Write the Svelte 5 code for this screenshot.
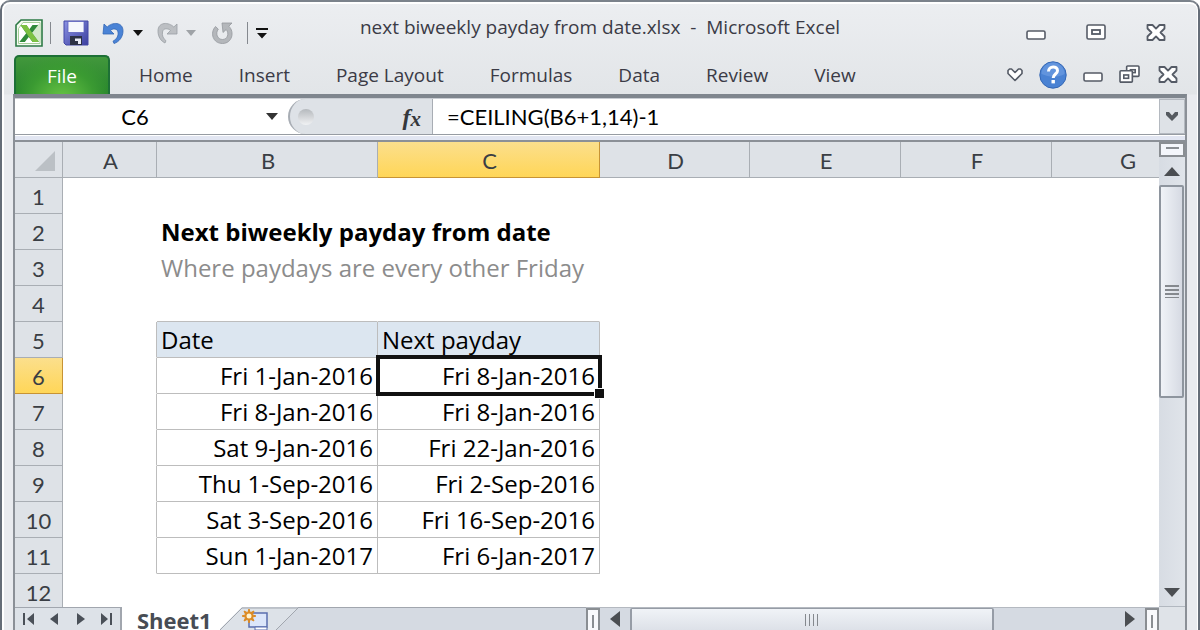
<script>
  const menus = ['Home', 'Insert', 'Page Layout', 'Formulas', 'Data', 'Review', 'View'];
  const columns = ['A', 'B', 'C', 'D', 'E', 'F', 'G'];
  const widths = [94, 221, 222, 150, 151, 151, 151];
  const rowNumbers = Array.from({ length: 12 }, (_, i) => i + 1);
  const active = 'C6';

  const cells = {
    B2: 'Next biweekly payday from date',
    B3: 'Where paydays are every other Friday',
    B5: 'Date',
    C5: 'Next payday',
    B6: 'Fri 1-Jan-2016',
    C6: 'Fri 8-Jan-2016',
    B7: 'Fri 8-Jan-2016',
    C7: 'Fri 8-Jan-2016',
    B8: 'Sat 9-Jan-2016',
    C8: 'Fri 22-Jan-2016',
    B9: 'Thu 1-Sep-2016',
    C9: 'Fri 2-Sep-2016',
    B10: 'Sat 3-Sep-2016',
    C10: 'Fri 16-Sep-2016',
    B11: 'Sun 1-Jan-2017',
    C11: 'Fri 6-Jan-2017'
  };

  let nameBox = $state(active);
  let formula = $state('=CEILING(B6+1,14)-1');

  const inTable = (col, row) => (col === 'B' || col === 'C') && row >= 5 && row <= 11;
</script>

{#snippet minimize()}
  <svg width="20" height="20" viewBox="0 0 20 20"><rect x="1" y="8" width="18" height="8" rx="1.5" fill="#fff" stroke="#555b66" stroke-width="1.6" /></svg>
{/snippet}

{#snippet cross()}
  <svg width="20" height="20" viewBox="0 0 20 20"><path d="M1.500 2h5l3.500 3.600L13.500 2h5v3.500L14.500 9.500l4 4V17h-5L10 13.400 6.500 17h-5v-3.500l4-4-4-4z" fill="#fff" stroke="#555b66" stroke-width="1.800" stroke-linejoin="round" /></svg>
{/snippet}

<div class="window">
  <header class="titlebar">
    <div class="quick">
      <svg width="28" height="28" viewBox="0 0 28 28">
        <path d="M6 1h21v26H1V6z" fill="#f4faf0" stroke="#2d7a45" stroke-width="1.6" />
        <path d="M3.500 9.500 8 3.500h17v21H3.500z" fill="#fff" stroke="#a6cf9a" />
        <path d="m17 8 7-3v18l-6-2z" fill="#d3e8cb" />
        <path d="M5.500 6h6l2.700 4.600L17.500 6h5.700l-6.200 8 6.800 9h-6.200l-3.800-5-4 5H4.300l6.900-8.800z" fill="#2f8a3a" />
        <path d="M5.500 6h6l12.300 17h-6.200z" fill="#7cc142" />
      </svg>
      <i class="divider"></i>
      <button class="save" aria-label="Save">
        <svg width="26" height="26" viewBox="0 0 26 26">
          <defs><linearGradient id="disk" x1="0" y1="0" x2="1" y2="1"><stop offset="0" stop-color="#8b92e4" /><stop offset="1" stop-color="#3b3f9f" /></linearGradient></defs>
          <path d="M1 1h24v24H3l-2-2z" fill="url(#disk)" stroke="#4247a6" />
          <path d="M5 1.500h16v11H5z" fill="#f5f7fd" stroke="#5a60bd" stroke-width=".8" />
          <path d="M7 16h12v9H7z" fill="#2c3145" />
          <path d="M12 18.500h6V24h-3v-3h-3z" fill="#e8ebf5" />
        </svg>
      </button>
      <button class="undo" aria-label="Undo">
        <svg width="24" height="24" viewBox="0 0 24 24"><path d="M2 3l3.200 3C10 1 21 .5 21 10c0 6-4 11-9 12.500l-1-2.300c4-2.200 5.500-5.500 5-9.200C15.500 7.500 11 7 8.500 9.500L12 13H1z" fill="#4a83d6" stroke="#3467b5" stroke-width=".8" /></svg>
      </button>
      <button class="drop" aria-label="Undo history"><svg width="10" height="6" viewBox="0 0 10 6"><path d="M0 0h10L5 6z" fill="#111" /></svg></button>
      <button class="redo" aria-label="Redo">
        <svg width="24" height="24" viewBox="0 0 24 24"><path d="M22 3l-3.200 3C14 1 3 .5 3 10c0 6 3 10 7 12l1-2.300C8 17.500 7 14.500 7.500 11 8 7 13 7 15.500 9.500L12 13h10z" fill="#bcbfc3" stroke="#9b9fa4" stroke-width=".8" /></svg>
      </button>
      <button class="drop" aria-label="Redo history"><svg width="10" height="6" viewBox="0 0 10 6"><path d="M0 0h10L5 6z" fill="#9fa3a7" /></svg></button>
      <button class="repeat" aria-label="Repeat">
        <svg width="24" height="24" viewBox="0 0 24 24"><path d="M11 2h10l-3.200 3.200C24 11 21 22.500 11.500 22.500 2 22.500-1.500 12 4.500 5.500l2.800 2.700C4 12.500 6.500 18.500 11.500 18.500s7-6 3.700-10L12 11.500z" fill="#b4b7bb" stroke="#94989d" stroke-width=".8" /></svg>
      </button>
      <i class="divider"></i>
      <button class="more" aria-label="Customize toolbar"><svg width="12" height="12" viewBox="0 0 12 12"><path d="M0 1h12v2H0zM1 6h10l-5 5.500z" fill="#111" /></svg></button>
    </div>
    <h1>next biweekly payday from date.xlsx&nbsp; -&nbsp; Microsoft Excel</h1>
    <div class="controls">
      <button aria-label="Minimize">{@render minimize()}</button>
      <button aria-label="Maximize"><svg width="20" height="20" viewBox="0 0 20 20"><rect x="1" y="2" width="18" height="14" rx="1.500" fill="#fff" stroke="#555b66" stroke-width="1.600" /><rect x="6" y="7" width="8" height="4" fill="#fff" stroke="#555b66" stroke-width="1.800" /></svg></button>
      <button aria-label="Close">{@render cross()}</button>
    </div>
  </header>

  <nav class="ribbon">
    <button class="file">File</button>
    {#each menus as menu}<button class="menu">{menu}</button>{/each}
    <div class="doc-controls">
      <button aria-label="Collapse ribbon"><svg width="16" height="14" viewBox="0 0 16 14"><path d="M1 2.500 2.500 1h2L8 4.500 11.500 1h2L15 2.500v3L8 12.500 1 5.500z" fill="#fff" stroke="#555b66" stroke-width="1.600" stroke-linejoin="round" /></svg></button>
      <button aria-label="Help"><svg width="28" height="28" viewBox="0 0 28 28"><circle cx="14" cy="14" r="13.200" fill="#4a82d3" stroke="#3567b4" /><path d="M2.500 13a11.500 11.500 0 0 1 23 0c-7 4-16 3-23 0z" fill="#6294dd" /><path d="M9.500 10.500c.2-6 9-6 9-.8 0 3.300-4.300 3.400-4.300 7.300" fill="none" stroke="#fff" stroke-width="3" /><rect x="12.500" y="19" width="3.400" height="3.400" fill="#fff" /></svg></button>
      <button aria-label="Minimize workbook">{@render minimize()}</button>
      <button class="restore" aria-label="Restore workbook"><svg width="21" height="19" viewBox="0 0 22 20"><g fill="#fff" stroke="#555b66" stroke-width="1.700"><rect x="8" y="1" width="13" height="11" rx="1" /><rect x="12" y="5" width="5" height="3" /><rect x="1" y="6" width="13" height="12" rx="1" /><rect x="5" y="10.500" width="5" height="3.500" /></g></svg></button>
      <button aria-label="Close workbook">{@render cross()}</button>
    </div>
  </nav>

  <main class="workbook">
    <div class="formula-bar">
      <input class="name-box" aria-label="Name box" bind:value={nameBox} />
      <button class="name-drop" aria-label="Named ranges"><svg width="12" height="7" viewBox="0 0 12 7"><path d="M0 0h12L6 7z" fill="#333" /></svg></button>
      <div class="function">
        <span class="knob"></span>
        <button aria-label="Insert function"><i>f</i><i class="x">x</i></button>
      </div>
      <input class="formula" aria-label="Formula" bind:value={formula} />
      <button class="expand" aria-label="Expand formula bar"><svg width="12" height="9" viewBox="0 0 12 9"><path d="M0 0h3l3 3.500L9 0h3v3L6 9 0 3z" fill="#555a60" /></svg></button>
    </div>
    <div class="strip"></div>

    <div class="body">
      <div class="viewport">
        <table>
          <colgroup>
            <col style:width="50px" />
            {#each widths as w}<col style:width="{w}px" />{/each}
          </colgroup>
          <thead>
            <tr>
              <th class="corner"><svg width="20" height="20" viewBox="0 0 20 20"><path d="M20 0v20H0z" fill="#bbc0c5" /></svg></th>
              {#each columns as col}<th scope="col" class:on={active[0] === col}>{col}</th>{/each}
            </tr>
          </thead>
          <tbody>
            {#each rowNumbers as row}
              <tr>
                <th scope="row" class:on={active.slice(1) === String(row)}>{row}</th>
                {#each columns as col}
                  {@const id = col + row}
                  <td
                    class:boxed={inTable(col, row)}
                    class:pre-first={col === 'A' && row >= 5 && row <= 11}
                    class:above={row === 4 && (col === 'B' || col === 'C')}
                    class:head={inTable(col, row) && row === 5}
                    class:title={id === 'B2'}
                    class:note={id === 'B3'}
                    class:active={id === active}
                  >{cells[id] ?? ''}{#if id === active}<span class="outline"></span><span class="handle"></span>{/if}</td>
                {/each}
              </tr>
            {/each}
          </tbody>
        </table>
      </div>
      <div class="vscroll">
        <span class="split"></span>
        <button class="up" aria-label="Scroll up"><svg width="16" height="9" viewBox="0 0 16 9"><path d="M8 0l8 9H0z" fill="#4b4e52" /></svg></button>
        <div class="vtrack"><div class="vthumb"><span></span></div></div>
        <button class="down" aria-label="Scroll down"><svg width="16" height="9" viewBox="0 0 16 9"><path d="M0 0h16L8 9z" fill="#4b4e52" /></svg></button>
      </div>
    </div>

    <footer>
      <div class="tab-nav">
        <button aria-label="First sheet"><svg width="12" height="12" viewBox="0 0 12 12"><path d="M1 0h2v12H1zM12 0v12L5 6z" fill="#4a5058" /></svg></button>
        <button aria-label="Previous sheet"><svg width="12" height="12" viewBox="0 0 12 12"><path d="M10 0v12L2 6z" fill="#4a5058" /></svg></button>
        <button aria-label="Next sheet"><svg width="12" height="12" viewBox="0 0 12 12"><path d="M2 0v12l8-6z" fill="#4a5058" /></svg></button>
        <button aria-label="Last sheet"><svg width="12" height="12" viewBox="0 0 12 12"><path d="M9 0h2v12H9zM0 0v12l7-6z" fill="#4a5058" /></svg></button>
      </div>
      <button class="sheet">Sheet1</button>
      <button class="new-sheet" aria-label="Insert worksheet">
        <svg width="78" height="23" viewBox="0 0 78 23">
          <path d="M0 0h22L0 22z" fill="#fff" />
          <path d="M22 1h56L56 23H0z" fill="#dde2e8" />
          <path d="M78 1 56 23h22z" fill="#d5dae2" />
          <path d="M0 23 22 1h56L56 23" fill="none" stroke="#a1a6ae" />
          <path d="M29 6h18v14H29z" fill="#dce6fa" stroke="#5b6fae" stroke-width="1.500" />
          <path d="M35 20h12v3H35z" fill="#fff" stroke="#5b6fae" />
          <path d="m29 2 1.300 3.800L34 4l-1.700 3.700L36 9l-3.700 1.300L34 14l-3.700-1.800L29 16l-1.300-3.800L24 14l1.700-3.700L22 9l3.700-1.300L24 4l3.700 1.800z" fill="#dc8a22" stroke="#dc8a22" />
          <circle cx="29" cy="9" r="2.500" fill="#fff3cf" />
        </svg>
      </button>
      <span class="gap"></span>
      <div class="hscroll">
        <span class="hsplit"></span>
        <button aria-label="Scroll left"><svg width="10" height="16" viewBox="0 0 10 16"><path d="M10 0v16L0 8z" fill="#4b4e52" /></svg></button>
        <div class="htrack"><div class="hthumb"><span></span></div></div>
        <button class="right" aria-label="Scroll right"><svg width="10" height="16" viewBox="0 0 10 16"><path d="M0 0v16l10-8z" fill="#4b4e52" /></svg></button>
        <span class="hsplit"></span>
      </div>
      <span class="size-corner"></span>
    </footer>
  </main>
</div>

<style>
  :global(body) {
    background: #fff;
  }
  :global(#app) {
    height: 100vh;
    overflow: hidden;
  }
  * {
    box-sizing: border-box;
  }
  button {
    display: flex;
    align-items: center;
    justify-content: center;
    margin: 0;
    padding: 0;
    border: 0;
    background: none;
    color: inherit;
    font: inherit;
  }
  svg {
    display: block;
    flex: none;
  }
  input {
    min-width: 0;
    margin: 0;
    padding: 0;
    border: 0;
    background: #fff;
    color: #000;
    font: 22px/34px Lato, sans-serif;
  }

  .window {
    display: flex;
    flex-direction: column;
    height: 100%;
    border: 2px solid #656d78;
    border-top-color: #7b828b;
    border-bottom: 0;
    border-radius: 10px 10px 0 0;
    box-shadow: inset 0 2px #fff, inset 2px 0 #fff, inset -1px 0 #fff;
    background: linear-gradient(#eceef1, #e2e5e8 92px, #e9ebef 93px);
    color: #3b3b46;
    font: 19px "Open Sans", sans-serif;
    overflow: hidden;
  }
  .titlebar {
    flex: none;
    display: grid;
    grid-template-columns: 1fr auto 1fr;
    height: 53px;
  }
  .quick {
    display: flex;
    align-items: center;
    padding: 8px 0 0 13px;
  }
  .divider {
    width: 1px;
    height: 22px;
    margin: 0 12px 0 7px;
    background: #85898f;
  }
  .undo {
    margin-left: 13px;
  }
  .drop {
    width: 20px;
    margin-left: 2px;
  }
  .redo {
    margin-left: 7px;
  }
  .repeat {
    margin-left: 10px;
  }
  .repeat + .divider {
    margin: 0 8px 0 12px;
  }
  h1 {
    margin: 0;
    font: 19px/50px "Open Sans", sans-serif;
    white-space: nowrap;
  }
  .controls {
    display: flex;
    justify-content: flex-end;
    gap: 40px;
    padding: 8px 32px 0 0;
  }

  .ribbon {
    flex: none;
    display: flex;
    height: 39px;
    padding: 0 20px 0 12px;
  }
  .file {
    width: 96px;
    margin-right: 6px;
    border: 2px solid #1d7036;
    border-bottom: 0;
    border-radius: 5px 5px 0 0;
    background: radial-gradient(ellipse at 50% 115%, #68c545, #3b9b32 50%, transparent 78%), linear-gradient(#42983c, #25832b);
    color: #fff;
  }
  .menu {
    padding: 0 23px;
    white-space: nowrap;
  }
  .doc-controls {
    display: flex;
    align-items: center;
    gap: 16px;
    margin-left: auto;
  }
  .restore {
    padding-right: 2px;
  }

  .workbook {
    flex: 1;
    display: flex;
    flex-direction: column;
    min-height: 0;
    margin: 0 11px;
    border: 2px solid #8b9097;
    border-top: 4px solid #7f868e;
    border-bottom: 0;
  }
  .formula-bar {
    flex: none;
    display: flex;
    height: 37px;
    border-top: 1px solid #c9cdd3;
    border-bottom: 1px solid #979ca3;
    background: #fff;
  }
  .name-box {
    width: 240px;
    text-align: center;
  }
  .name-drop {
    width: 33px;
  }
  .function {
    display: flex;
    align-items: center;
    justify-content: space-between;
    width: 145px;
    padding: 0 11px 0 8px;
    border: 1px solid #a8adb4;
    border-width: 0 1px 0 2px;
    border-radius: 18px 0 0 18px;
    background: #dee2e7;
  }
  .knob {
    width: 16px;
    height: 16px;
    border-radius: 50%;
    background: linear-gradient(#b5b9bd, #f1f2f4);
  }
  .function i {
    color: #35383c;
    font: italic bold 24px/30px "Liberation Serif", serif;
  }
  .function .x {
    padding-top: 5px;
    font-size: 21px;
  }
  .formula {
    flex: 1;
    padding-left: 14px;
  }
  .expand {
    width: 26px;
    border: 1px solid #b4b9c0;
    background: #dee2e7;
  }
  .strip {
    flex: none;
    height: 7px;
    border-top: 1px solid #fff;
    border-bottom: 2px solid #8b9097;
    background: #e2e6f2;
  }

  .body {
    flex: 1;
    display: flex;
    min-height: 0;
    background: #fff;
  }
  .viewport {
    flex: 1;
    min-width: 0;
    overflow: hidden;
  }
  table {
    width: 1190px;
    margin-left: -2px;
    border-collapse: separate;
    border-spacing: 0;
    table-layout: fixed;
    font: 24px/28px "Open Sans", sans-serif;
  }
  th {
    height: 36px;
    padding: 2px 0 0 2px;
    border: 1px solid #a9aeb4;
    border-width: 0 1px 1px 0;
    background: #dee2e7;
    color: #3a3e44;
    font: 22px/28px Lato, sans-serif;
  }
  th.on {
    border-color: #c79334;
    background: linear-gradient(#fbdf8c, #ffd658);
  }
  .corner svg {
    margin-left: 20px;
  }
  td {
    height: 36px;
    padding: 0 4px;
    border: 1px solid transparent;
    border-width: 0 1px 1px 0;
    color: #000;
    white-space: nowrap;
  }
  .boxed {
    border-color: #bdbdbd;
    text-align: right;
  }
  .pre-first {
    border-right-color: #bdbdbd;
  }
  .above {
    border-bottom-color: #bdbdbd;
  }
  .head {
    background: #dce6f0;
    text-align: left;
  }
  .title {
    font-weight: 700;
  }
  .note {
    color: #8c8c8c;
  }
  .active {
    position: relative;
  }
  .outline {
    position: absolute;
    inset: -3px -3px -3px -2px;
    border: 4px solid #111;
  }
  .handle {
    position: absolute;
    right: -5px;
    bottom: -5px;
    width: 9px;
    height: 9px;
    outline: 1px solid #fff;
    background: #111;
  }

  .vscroll {
    display: flex;
    flex-direction: column;
    width: 26px;
    background: linear-gradient(90deg, #d7dce3, #e0e4ea);
  }
  .split {
    height: 15px;
    border: 2px solid #8a8e93;
    background: linear-gradient(#8a8e93, #8a8e93) center 3px / 13px 2px no-repeat #f4f6fb;
  }
  .up {
    height: 28px;
  }
  .vtrack {
    flex: 1;
  }
  .vthumb {
    display: flex;
    align-items: center;
    justify-content: center;
    width: 25px;
    height: 54%;
    border: 2px solid #8e959e;
    border-radius: 2px;
    background: linear-gradient(90deg, #f0f3f7, #d6dae3);
  }
  .vthumb span {
    width: 14px;
    height: 13px;
    background: repeating-linear-gradient(#85898e 0 2px, transparent 2px 4px);
  }
  .down {
    height: 28px;
    border-bottom: 1px solid #b2b8c0;
  }

  footer {
    flex: none;
    display: flex;
    height: 23px;
    background: #d5dae2;
  }
  .tab-nav {
    display: flex;
    justify-content: space-around;
    width: 107px;
    border: 1px solid #a1a6ae;
    border-width: 1px 2px 0 0;
    background: #dde2e8;
  }
  .sheet {
    padding: 4px 8px 0 15px;
    background: #fff;
    color: #474c54;
    font: bold 22px/19px "Open Sans", sans-serif;
  }
  .new-sheet {
    width: 78px;
  }
  .gap {
    flex: 1;
    border-top: 1px solid #a1a6ae;
  }
  .hscroll {
    display: flex;
    width: 49%;
    border-top: 1px solid #b4b9c0;
  }
  .hscroll button {
    width: 30px;
  }
  .hsplit {
    width: 14px;
    border: 2px solid #8a8e93;
    border-bottom: 0;
    background: linear-gradient(#8a8e93, #8a8e93) center 5px / 2px 13px no-repeat #f8f9fc;
  }
  .htrack {
    flex: 1;
  }
  .hthumb {
    display: flex;
    align-items: center;
    justify-content: center;
    width: 75%;
    height: 100%;
    border: 2px solid #969ca6;
    border-width: 1px 2px 0;
    border-radius: 2px 2px 0 0;
    background: linear-gradient(#f0f3f7, #dde1e8);
  }
  .hthumb span {
    width: 13px;
    height: 12px;
    background: repeating-linear-gradient(90deg, #85898e 0 1px, transparent 1px 4px);
  }
  .size-corner {
    width: 26px;
    background: #dfe3e8;
  }
</style>
